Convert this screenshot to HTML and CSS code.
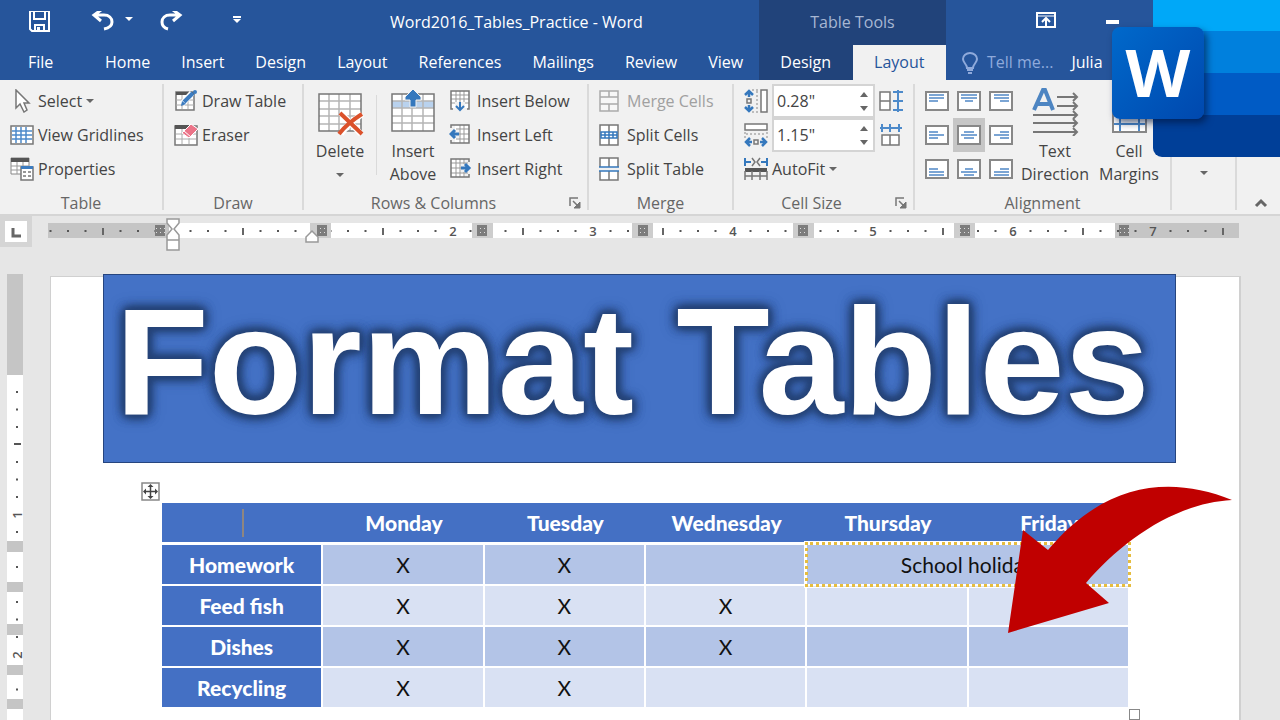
FILE: index.html
```html
<!DOCTYPE html>
<html lang="en">
<head>
    <meta charset="UTF-8">
    <meta name="viewport" content="width=device-width, initial-scale=1.0">
    <title>Word2016_Tables_Practice - Word</title>
    <link rel="stylesheet" href="styles.css">
</head>
<body>
    <header class="top-bar">
        <div class="top-main">
            <div class="title-row">
                <div class="quick-access">
                    <button class="qa-btn qa-save" aria-label="Save">
                        <svg width="24" height="24" viewBox="0 0 24 24" fill="none" stroke="#fff" stroke-width="2"><path d="M2 0h19v20H4l-2-2z"/><path d="M6 1v7h11V1" /><path d="M7 20v-6h9v6" /><path d="M9 16h3v4H9z" fill="#fff" stroke="none"/></svg>
                    </button>
                    <button class="qa-btn" aria-label="Undo">
                        <svg width="24" height="24" viewBox="0 6 24 24" fill="none" stroke="#fff" stroke-width="3"><path d="m10 4-7 5 7 6M3 9h10c5 0 8 3 8 7s-3 6-8 7" transform="translate(0 1)"/></svg>
                    </button>
                    <button class="qa-btn qa-more" aria-label="Undo list">
                        <svg width="12" height="24" viewBox="0 4 12 24"><path d="M2 10h8l-4 4z" fill="#fff"/></svg>
                    </button>
                    <button class="qa-btn qa-redo" aria-label="Redo">
                        <svg width="24" height="24" viewBox="0 6 24 24" fill="none" stroke="#fff" stroke-width="3"><path d="m14 4 7 5-7 6M21 9H11c-5 0-8 3-8 7s2 6 6 7" transform="translate(0 1)"/></svg>
                    </button>
                    <button class="qa-btn" aria-label="Customize Quick Access Toolbar">
                        <svg width="12" height="24" viewBox="0 4 12 24" fill="#fff"><path d="M2 9h8v2H2zM2 12h8l-4 4z"/></svg>
                    </button>
                </div>
                <div class="doc-title">Word2016_Tables_Practice - Word</div>
            </div>
            <nav class="tabs">
                <button class="tab tab-file">File</button>
                <button class="tab">Home</button>
                <button class="tab">Insert</button>
                <button class="tab">Design</button>
                <button class="tab">Layout</button>
                <button class="tab">References</button>
                <button class="tab">Mailings</button>
                <button class="tab">Review</button>
                <button class="tab">View</button>
            </nav>
        </div>
        <div class="top-context">
            <div class="context-title">Table Tools</div>
            <nav class="context-tabs">
                <button class="tab">Design</button>
                <button class="tab tab-active">Layout</button>
            </nav>
        </div>
        <div class="top-right">
            <div class="window-row">
                <button class="qa-btn" aria-label="Ribbon display options">
                    <svg width="20" height="18" viewBox="0 0 20 18" fill="none" stroke="#fff"><path d="M1 2h18v14H1z" stroke-width="2"/><path d="M2 5h16"/><path d="M10 15V8M6 11l4-4 4 4" stroke-width="2"/></svg>
                </button>
                <button class="qa-btn" aria-label="Minimize">
                    <svg width="14" height="18" viewBox="0 0 14 18"><path d="M0 9h13v4H0z" fill="#fff"/></svg>
                </button>
            </div>
            <div class="tell-row">
                <button class="tell-me">
                    <svg width="18" height="24" viewBox="0 0 18 24" fill="none" stroke="#8faadb" stroke-width="2"><path d="M6 17c0-4-4-5-4-9a7 6 0 0 1 14 0c0 4-4 5-4 9zM6 19h6M7 22h4"/></svg>
                    Tell me...
                </button>
                <button class="account">Julia</button>
            </div>
        </div>
    </header>

    <section class="ribbon">
        <div class="group group-table">
            <div class="group-body">
                <div class="stack">
                    <button class="cmd">
                        <svg width="24" height="24" viewBox="0 0 24 24"><path d="M6 1v18l4-4 4 8 3-2-3-7h5z" fill="#fff" stroke="#777" stroke-width="1.5"/></svg>
                        Select <span class="caret"></span>
                    </button>
                    <button class="cmd">
                        <svg width="24" height="24" viewBox="0 0 24 24" fill="none"><path d="M1 3h22v18H1z" fill="#fff" stroke="#777" stroke-width="1.5"/><path d="M6 4v16M11 4v16M16 4v16M2 8h20M2 12h20M2 16h20" stroke="#4d8aca" stroke-width="1.5"/></svg>
                        View Gridlines
                    </button>
                    <button class="cmd">
                        <svg width="24" height="24" viewBox="0 0 24 24" fill="none"><path d="M1 1h18v16H1z" fill="#fff" stroke="#888"/><path d="M1 1h18v4H1z" fill="#555"/><path d="M7 5v12M13 5v12M1 9h18M1 13h18" stroke="#999"/><path d="M11 10h12v13H11z" fill="#fff" stroke="#777" stroke-width="1.5"/><path d="M11 9h12v3H11z" fill="#3c7cc0"/><path d="M13 15h3M18 15h3M13 19h3M18 19h3" stroke="#777" stroke-width="1.5"/></svg>
                        Properties
                    </button>
                </div>
            </div>
            <div class="group-name">Table</div>
        </div>

        <div class="group group-draw">
            <div class="group-body">
                <div class="stack">
                    <button class="cmd">
                        <svg width="24" height="24" viewBox="0 0 24 24" fill="none"><path d="M2 3h18v18H2z" fill="#fff" stroke="#777" stroke-width="1.5"/><path d="M2 3h18v3H2z" fill="#555"/><path d="M8 6v14M14 6v14M2 11h18M2 16h18" stroke="#aaa"/><path d="m8 15 10-11" stroke="#fff" stroke-width="6"/><path d="m10 13 9-9" stroke="#3c7cc0" stroke-width="4"/><path d="m7 17 1-5 4 3z" fill="#3c7cc0"/><circle cx="21" cy="3" r="2" fill="#3c7cc0"/></svg>
                        Draw Table
                    </button>
                    <button class="cmd">
                        <svg width="24" height="24" viewBox="0 0 24 24" fill="none"><path d="M1 3h22v19H1z" fill="#fff" stroke="#777" stroke-width="1.5"/><path d="M1 2h16v4H1z" fill="#555"/><path d="M8 6v15M15 6v15M2 11h20M2 16h20" stroke="#aaa"/><path d="m8 10 9-9 7 5-9 9z" fill="#eb7488" stroke="#fff"/><path d="m10 8 7 6" stroke="#fff"/></svg>
                        Eraser
                    </button>
                </div>
            </div>
            <div class="group-name">Draw</div>
        </div>

        <div class="group group-rows">
            <div class="group-body">
                <button class="big-cmd">
                    <svg width="48" height="48" viewBox="0 0 48 48" fill="none"><path d="M3 6h42v37H3z" fill="#fff"/><path d="M13 6v37M23 6v37M34 6v37M3 13h42M3 21h42M3 28h42M3 36h42" stroke="#b5b5b5" stroke-width="1.5"/><path d="M3 6h42v37H3z" stroke="#777" stroke-width="1.5"/><path d="M25 25 45 46M46 26C38 32 30 38 25 46" stroke="#fff" stroke-width="6"/><path d="M24 25 46 46M46 26C38 31 29 38 23 46" stroke="#db512b" stroke-width="4"/></svg>
                    <span>Delete</span>
                    <span class="big-line"><i class="caret"></i></span>
                </button>
                <span class="divider"></span>
                <button class="big-cmd">
                    <svg width="48" height="48" viewBox="0 0 48 48" fill="none"><path d="M3 6h42v37H3z" fill="#fff"/><path d="M3 13h42v7H3z" fill="#b9d2ee"/><path d="M13 6v37M23 6v37M34 6v37M3 13h42M3 20h42M3 28h42M3 35h42" stroke="#b5b5b5" stroke-width="1.5"/><path d="M3 6h42v37H3z" stroke="#777" stroke-width="1.5"/><path d="m24 1 8 8v3h-5v7h-6v-7h-5V9z" fill="#3578bd" stroke="#f1f1f1"/></svg>
                    <span>Insert<br>Above</span>
                </button>
                <div class="stack">
                    <button class="cmd">
                        <svg width="24" height="24" viewBox="0 0 24 24" fill="none"><path d="M2 2h18v17H2z" fill="#fff"/><path d="M7 2v15M11 2v15M15 2v15M2 6h18M2 10h18M2 14h18" stroke="#999"/><path d="M4 20H2V2h18v18h-2" stroke="#777" stroke-width="1.5"/><path d="M6 13h10v11H6z" fill="#f1f1f1"/><path d="M11 13v8M7 17l4 4 4-4" stroke="#3578bd" stroke-width="2"/></svg>
                        Insert Below
                    </button>
                    <button class="cmd">
                        <svg width="24" height="24" viewBox="0 0 24 24" fill="none"><path d="M6 2h14v18H6z" fill="#fff"/><path d="M11 2v18M15 2v18M7 6h13M7 11h13M7 16h13" stroke="#999"/><path d="M2 5V2h18v18H2v-3" stroke="#777" stroke-width="1.5"/><path d="M1 7h9v8H1z" fill="#f1f1f1"/><path d="M10 11H2M6 7l-4 4 4 4" stroke="#3578bd" stroke-width="3"/></svg>
                        Insert Left
                    </button>
                    <button class="cmd">
                        <svg width="24" height="24" viewBox="0 0 24 24" fill="none"><path d="M2 2h14v18H2z" fill="#fff"/><path d="M7 2v18M11 2v18M15 2v18M2 6h17M2 11h14M2 16h17" stroke="#999"/><path d="M20 5V2H2v18h18v-3" stroke="#777" stroke-width="1.5"/><path d="M12 7h9v8h-9z" fill="#f1f1f1"/><path d="M12 11h8M16 7l4 4-4 4" stroke="#3578bd" stroke-width="3"/></svg>
                        Insert Right
                    </button>
                </div>
            </div>
            <div class="group-name">Rows &amp; Columns</div>
            <button class="launcher" aria-label="Insert Cells"><svg width="12" height="12" viewBox="0 0 12 12" fill="none" stroke="#777"><path d="M1 9V1h8M4 4l5 5" stroke-width="1.5"/><path d="M11 5v6H5z" fill="#777"/></svg></button>
        </div>

        <div class="group group-merge">
            <div class="group-body">
                <div class="stack">
                    <button class="cmd" disabled>
                        <svg width="24" height="24" viewBox="0 0 24 24" fill="#f7f7f7" stroke="#aaa" stroke-width="1.5"><path d="M1 2h18v20H1zM1 8h18M1 15h18M10 2v6M10 15v7"/></svg>
                        Merge Cells
                    </button>
                    <button class="cmd">
                        <svg width="24" height="24" viewBox="0 0 24 24" fill="#fff" stroke="#777" stroke-width="1.5"><path d="M1 2h18v20H1zM10 2v20"/><path d="M2 9h16v6H2zM6 9v6M10 9v6M14 9v6M2 12h16" stroke="#3578bd"/></svg>
                        Split Cells
                    </button>
                    <button class="cmd">
                        <svg width="24" height="24" viewBox="0 0 24 24" fill="#fff" stroke="#777" stroke-width="1.5"><path d="M1 10V1h18v9M10 1v9M1 14v9h18v-9M10 14v9"/><path d="M0 10h20M0 14h20" stroke="#3578bd"/></svg>
                        Split Table
                    </button>
                </div>
            </div>
            <div class="group-name">Merge</div>
        </div>

        <div class="group group-size">
            <div class="group-body">
                <div class="stack">
                    <div class="size-row">
                        <label for="rowHeight" aria-label="Height"><svg width="24" height="24" viewBox="0 0 24 24" fill="none" stroke="#777" stroke-width="1.5"><path d="M17 1h6v22h-6z" fill="#fff"/><path d="M8 1h8M8 23h8M13 2v20" stroke="#aaa" stroke-dasharray="2 2"/><path d="M3 10h4v4H3z"/><path d="M5 8V2M1 6l4-4 4 4M5 16v6M1 18l4 4 4-4" stroke="#3578bd" stroke-width="2.5"/></svg></label>
                        <div class="spin">
                            <input type="text" id="rowHeight" value="0.28&quot;">
                            <div class="spin-btns"><button aria-label="Taller" class="spin-up"></button><button aria-label="Shorter" class="spin-down"></button></div>
                        </div>
                        <button class="distribute" aria-label="Distribute rows"><svg width="24" height="24" viewBox="0 0 24 24" fill="none" stroke="#777" stroke-width="1.5"><path d="M1 3h10v18H1zM1 12h10" fill="#fff"/><path d="M14 3h10M14 12h10M14 21h10M19 1v22" stroke="#4d8aca" stroke-width="2"/></svg></button>
                    </div>
                    <div class="size-row">
                        <label for="colWidth" aria-label="Width"><svg width="24" height="24" viewBox="0 0 24 24" fill="none" stroke="#777" stroke-width="1.5"><path d="M1 1h22v6H1z" fill="#fff"/><path d="M1 9v7M23 9v7M2 11h20" stroke="#aaa" stroke-dasharray="2 2"/><path d="M10 17h4v4h-4z"/><path d="M8 19H2M6 15l-4 4 4 4M16 19h6M18 15l4 4-4 4" stroke="#3578bd" stroke-width="2.5"/></svg></label>
                        <div class="spin">
                            <input type="text" id="colWidth" value="1.15&quot;">
                            <div class="spin-btns"><button aria-label="Wider" class="spin-up"></button><button aria-label="Narrower" class="spin-down"></button></div>
                        </div>
                        <button class="distribute" aria-label="Distribute columns"><svg width="24" height="24" viewBox="0 0 24 24" fill="none" stroke="#777" stroke-width="1.5"><path d="M3 12h17v10H3zM11 12v10" fill="#fff"/><path d="M1 5h22M3 1v8M11 1v8M20 1v8" stroke="#4d8aca" stroke-width="2"/></svg></button>
                    </div>
                    <button class="cmd">
                        <svg width="24" height="24" viewBox="0 0 24 24" fill="none" stroke="#777" stroke-width="1.5"><path d="M1 1v8M1 5h6M23 1v8M23 5h-6" stroke="#3578bd" stroke-width="2"/><path d="m8 1 3 4-3 4M16 1l-3 4 3 4"/><path d="M1 13h22" stroke="#555" stroke-width="4"/><path d="M1 14v9M8 14v9M16 14v9M23 14v9M1 19h22"/></svg>
                        AutoFit <span class="caret"></span>
                    </button>
                </div>
            </div>
            <div class="group-name">Cell Size</div>
            <button class="launcher" aria-label="Table Properties"><svg width="12" height="12" viewBox="0 0 12 12" fill="none" stroke="#777"><path d="M1 9V1h8M4 4l5 5" stroke-width="1.5"/><path d="M11 5v6H5z" fill="#777"/></svg></button>
        </div>

        <div class="group group-align">
            <div class="group-body">
                <div class="align-grid">
                    <button aria-label="Align top left"><svg width="24" height="20" viewBox="0 0 24 20"><path class="box" d="M1 1h22v18H1z"/><path class="ln" d="M4 4h15M4 7h15M4 10h9"/></svg></button>
                    <button aria-label="Align top center"><svg width="24" height="20" viewBox="0 0 24 20"><path class="box" d="M1 1h22v18H1z"/><path class="ln" d="M4 4h16M4 7h16M8 10h8"/></svg></button>
                    <button aria-label="Align top right"><svg width="24" height="20" viewBox="0 0 24 20"><path class="box" d="M1 1h22v18H1z"/><path class="ln" d="M5 4h15M5 7h15M11 10h9"/></svg></button>
                    <button aria-label="Align center left"><svg width="24" height="20" viewBox="0 0 24 20"><path class="box" d="M1 1h22v18H1z"/><path class="ln" d="M4 7h9M4 10h15M4 13h9"/></svg></button>
                    <button aria-label="Align center" class="on"><svg width="24" height="20" viewBox="0 0 24 20"><path class="box" d="M1 1h22v18H1z"/><path class="ln" d="M7 7h10M4 10h16M7 13h10"/></svg></button>
                    <button aria-label="Align center right"><svg width="24" height="20" viewBox="0 0 24 20"><path class="box" d="M1 1h22v18H1z"/><path class="ln" d="M11 7h9M5 10h15M11 13h9"/></svg></button>
                    <button aria-label="Align bottom left"><svg width="24" height="20" viewBox="0 0 24 20"><path class="box" d="M1 1h22v18H1z"/><path class="ln" d="M4 10h9M4 13h15M4 16h15"/></svg></button>
                    <button aria-label="Align bottom center"><svg width="24" height="20" viewBox="0 0 24 20"><path class="box" d="M1 1h22v18H1z"/><path class="ln" d="M8 10h8M4 13h16M7 16h10"/></svg></button>
                    <button aria-label="Align bottom right"><svg width="24" height="20" viewBox="0 0 24 20"><path class="box" d="M1 1h22v18H1z"/><path class="ln" d="M11 10h9M5 13h15M5 16h15"/></svg></button>
                </div>
                <button class="big-cmd big-direction">
                    <svg width="48" height="48" viewBox="0 0 48 48" fill="none" stroke="#777" stroke-width="2"><path d="M3 22 12 2h2l8 20M7 16h11" stroke="#4d85c2" stroke-width="4"/><path d="M26 9h20M26 18h20M2 27h44M2 35h44M2 44h44"/><path d="m42 5 4 4-4 4M42 14l4 4-4 4M42 23l4 4-4 4M42 31l4 4-4 4M42 40l4 4-4 4"/></svg>
                    <span>Text<br>Direction</span>
                </button>
                <button class="big-cmd big-margins">
                    <svg width="48" height="48" viewBox="0 0 48 48" fill="none"><path d="M8 6h33v38H8z" fill="#fff" stroke="#888" stroke-width="2"/><path d="M15 7v36M34 7v36M9 14h31M9 36h31" stroke="#4d8aca" stroke-width="2"/></svg>
                    <span>Cell<br>Margins</span>
                </button>
            </div>
            <div class="group-name">Alignment</div>
        </div>

        <div class="group group-data">
            <button class="group-more" aria-label="Data"><span class="caret"></span></button>
        </div>
        <div class="group-end">
            <button class="collapse" aria-label="Collapse the Ribbon"><svg width="14" height="10" viewBox="0 0 14 10" fill="none" stroke="#666" stroke-width="3"><path d="m2 8 5-5 5 5"/></svg></button>
        </div>
    </section>

    <div class="ruler-row">
        <button class="tab-stop" aria-label="Left tab"><svg width="12" height="12" viewBox="0 0 12 12" fill="none" stroke="#666" stroke-width="3"><path d="M3 2v8h8"/></svg></button>
        <!-- horizontal ruler, 140px to the inch, zero at x=125 -->
        <svg class="ruler" width="1192" height="36" viewBox="0 0 1192 36">
            <defs>
                <pattern id="mesh" width="4" height="4" patternUnits="userSpaceOnUse"><path d="M0 0h4v4H0z" fill="#7d7d7d"/><path d="M0 0h1v1H0z" fill="#ddd"/></pattern>
            </defs>
            <path d="M0 7h1191v15H0z" fill="#fff"/>
            <path d="M0 7h121v15H0zM1067 7h124v15h-124z" fill="#c5c5c5"/>
            <path d="M1.500 15H1190" stroke="#555" stroke-width="2" stroke-dasharray="2 15.500 2 15.500 2 33 2 15.500 2 15.500 2 33"/>
            <path d="M54 15.500H1190" stroke="#666" stroke-width="7" stroke-dasharray="2 138"/>
            <g fill="#cdcdcd"><path d="M262 7h21v15h-21zM424 7h21v15h-21zM584 7h21v15h-21zM745 7h21v15h-21zM906 7h21v15h-21z"/></g>
            <g fill="url(#mesh)"><path d="M107 9h10v11h-10zM269 9h10v11h-10zM429 9h10v11h-10zM590 9h10v11h-10zM750 9h10v11h-10zM912 9h10v11h-10zM1071 9h10v11h-10z"/></g>
            <g class="ruler-num"><text x="405" y="20">2</text><text x="545" y="20">3</text><text x="685" y="20">4</text><text x="825" y="20">5</text><text x="965" y="20">6</text><text x="1105" y="20">7</text></g>
            <g fill="#fff" stroke="#999" stroke-width="1.500"><path d="M119 3h12v4l-5 6 5 6v15h-12V19l5-6-5-6zM119 24h12"/><path d="M258 26v-5l6-6 6 6v5z"/></g>
        </svg>
    </div>

    <main class="workspace">
        <!-- vertical ruler -->
        <svg class="v-ruler" width="26" height="446" viewBox="0 0 26 446">
            <path d="M0 101h16v345H0z" fill="#fff"/>
            <path d="M10 117V446" stroke="#555" stroke-width="2" stroke-dasharray="2 15.500 2 15.500 2 33 2 15.500 2 15.500 2 33"/>
            <path d="M0 0h16v101H0zM0 267h16v11H0zM0 308h16v10H0zM0 350h16v11H0zM0 391h16v10H0zM0 425h16v10H0z" fill="#c5c5c5"/>
            <path d="M7 170h7" stroke="#555" stroke-width="2"/>
            <g class="ruler-num"><text transform="translate(15 241) rotate(-90)">1</text><text transform="translate(15 381) rotate(-90)">2</text></g>
        </svg>
        <article class="page">
            <h1 class="banner">Format Tables</h1>
            <div class="table-wrap">
                <svg class="move-handle" width="19" height="19" viewBox="0 0 19 19" fill="none"><path d="M1 1h17v17H1z" fill="#fff" stroke="#888" stroke-width="1.500"/><path d="M9.500 4v11M4 9.500h11" stroke="#444" stroke-width="1.500"/><path d="m9.500 2 3 3h-6zM9.500 17l3-3h-6zM2 9.500l3-3v6zM17 9.500l-3-3v6z" fill="#444"/></svg>
                <table class="chores">
                    <thead>
                        <tr>
                            <th><span class="text-cursor"></span></th>
                            <th>Monday</th>
                            <th>Tuesday</th>
                            <th>Wednesday</th>
                            <th>Thursday</th>
                            <th>Friday</th>
                        </tr>
                    </thead>
                    <tbody>
                        <tr><th>Homework</th><td>X</td><td>X</td><td></td><td colspan="2" class="merged">School holiday</td></tr>
                        <tr><th>Feed fish</th><td>X</td><td>X</td><td>X</td><td></td><td></td></tr>
                        <tr><th>Dishes</th><td>X</td><td>X</td><td>X</td><td></td><td></td></tr>
                        <tr><th>Recycling</th><td>X</td><td>X</td><td></td><td></td><td></td></tr>
                    </tbody>
                </table>
                <span class="resize-handle"></span>
                <svg class="arrow" width="226" height="148" viewBox="1007 486 226 148"><path d="M1232 500C1170 475 1105 482 1048 550L1023 530 1008 633 1109 603 1086 583C1122 541 1175 503 1232 500Z" fill="#c00000"/></svg>
            </div>
        </article>
    </main>

    <div class="word-logo">
        <div class="logo-sheets"><span></span><span></span><span></span><span></span></div>
        <div class="logo-tile">W</div>
    </div>
</body>
</html>
```
FILE: styles.css
```css
* {
    box-sizing: border-box;
}
body {
    margin: 0;
    height: 100vh;
    overflow: hidden;
    position: relative;
    display: flex;
    flex-direction: column;
    background-color: #e6e6e6;
    color: #444;
    font-family: "Open Sans", "Noto Sans", sans-serif;
    font-size: 16px;
    line-height: 23px;
}
button {
    border: none;
    background: none;
    padding: 0;
    margin: 0;
    color: inherit;
    font: inherit;
    white-space: nowrap;
}
svg {
    display: block;
    flex: none;
}

/* title bar and tabs */
.top-bar {
    display: flex;
    flex: none;
    height: 80px;
    background-color: #26559b;
    color: #fff;
}
.top-main {
    flex: 1;
}
.title-row {
    display: flex;
    align-items: center;
    height: 45px;
}
.quick-access {
    display: flex;
    align-items: center;
    width: 390px;
    height: 36px;
    padding-left: 28px;
}
.qa-save {
    margin-right: 39px;
}
.qa-more {
    margin: 0 24px 0 8px;
}
.qa-redo {
    margin-right: 48px;
}
.tabs {
    display: flex;
    gap: 3px;
    height: 35px;
    padding-left: 14px;
}
.tab {
    padding: 0 14px;
}
.tab-file {
    width: 74px;
    text-align: left;
}
.top-context {
    display: flex;
    flex-direction: column;
    width: 187px;
    background-color: #21437a;
}
.context-title {
    height: 45px;
    line-height: 45px;
    text-align: center;
    color: #a7b7d3;
}
.context-tabs {
    display: flex;
    height: 35px;
}
.context-tabs .tab {
    flex: 1;
}
.tab-active {
    background-color: #f1f1f1;
    color: #26559b;
}
.top-right {
    width: 334px;
}
.window-row {
    display: flex;
    align-items: center;
    gap: 50px;
    height: 45px;
    padding: 0 0 6px 90px;
}
.tell-row {
    display: flex;
    align-items: center;
    gap: 18px;
    height: 35px;
    padding-left: 15px;
}
.tell-me {
    display: flex;
    align-items: center;
    gap: 8px;
    color: #8faadb;
}

/* ribbon */
.ribbon {
    display: flex;
    flex: none;
    height: 136px;
    padding-top: 4px;
    background-color: #f1f1f1;
    border-bottom: 2px solid #d5d5d5;
}
.group {
    position: relative;
    display: flex;
    flex-direction: column;
    height: 126px;
    border-right: 2px solid #dadada;
}
.group-body {
    display: flex;
    height: 102px;
    padding-left: 10px;
}
.group-name {
    height: 24px;
    line-height: 34px;
    text-align: center;
    color: #666;
}
.group-table { width: 164px; }
.group-draw { width: 140px; }
.group-rows { width: 285px; }
.group-merge { width: 145px; }
.group-size { width: 181px; }
.group-align { width: 257px; }
.group-data { width: 65px; }
.group-rows .group-body {
    padding-left: 0;
}
.group-align .group-body {
    padding-left: 6px;
}
.group-rows .group-name,
.group-size .group-name {
    padding-right: 24px;
}
.stack {
    display: flex;
    flex-direction: column;
}
.cmd {
    display: flex;
    align-items: center;
    gap: 4px;
    height: 34px;
}
.cmd:disabled {
    color: #a0a0a0;
}
.caret {
    display: inline-block;
    border: 4px solid transparent;
    border-top-color: #666;
    border-bottom: none;
}
.big-cmd {
    width: 72px;
    padding-top: 4px;
    display: flex;
    flex-direction: column;
    align-items: center;
}
.big-cmd svg {
    margin-bottom: 4px;
}
.big-line {
    line-height: 16px;
}
.big-direction {
    width: 76px;
}
.big-margins {
    width: 72px;
}
.divider {
    width: 1px;
    height: 80px;
    margin-top: 11px;
    background-color: #dadada;
}
.launcher {
    position: absolute;
    right: 6px;
    bottom: 1px;
}
.size-row {
    display: flex;
    align-items: center;
    gap: 4px;
    height: 34px;
}
.spin {
    display: flex;
    width: 103px;
    height: 34px;
    background-color: #fff;
    border: 2px solid #d4d4d4;
}
.spin input {
    width: 80px;
    padding: 0 0 0 3px;
    border: none;
    background: none;
    color: #444;
    font: inherit;
}
.spin-btns {
    display: flex;
    flex-direction: column;
    justify-content: center;
    gap: 9px;
    padding-left: 6px;
}
.spin-up,
.spin-down {
    border: 4px solid transparent;
}
.spin-up {
    border-bottom: 5px solid #666;
    border-top: none;
}
.spin-down {
    border-top: 5px solid #666;
    border-bottom: none;
}
.align-grid {
    display: grid;
    grid-template-columns: repeat(3, 32px);
    grid-auto-rows: 34px;
}
.align-grid button {
    display: flex;
    align-items: center;
    justify-content: center;
}
.align-grid .on {
    background-color: #c6c6c6;
}
.box {
    fill: #fff;
    stroke: #888;
    stroke-width: 2;
}
.ln {
    stroke: #7ba5d4;
    stroke-width: 2;
}
.group-more {
    padding-top: 74px;
}
.group-end {
    flex: 1;
    display: flex;
    align-items: flex-end;
    justify-content: center;
    padding: 0 0 6px 4px;
}

/* rulers */
.ruler-row {
    display: flex;
    flex: none;
    align-items: flex-start;
    height: 58px;
    gap: 16px;
}
.tab-stop {
    display: flex;
    align-items: center;
    justify-content: center;
    width: 32px;
    height: 31px;
    border: 5px solid #d5d5d5;
    background-color: #fff;
}
.ruler-num {
    font-size: 13px;
    font-weight: 600;
    text-anchor: middle;
    fill: #555;
}
.workspace {
    display: flex;
    flex: 1;
    min-height: 0;
    padding: 0 39px 0 7px;
}

/* document */
.page {
    flex: 1;
    margin: 2px 0 0 17px;
    padding: 0 63px 0 52px;
    background-color: #fff;
    border: 1px solid #d0d0d0;
    border-right-width: 2px;
    border-bottom: none;
}
.banner {
    height: 189px;
    margin: -3px 0 40px;
    padding-right: 14px;
    border: 1px solid #26457f;
    background-color: #4472c6;
    color: #fff;
    font-family: "Liberation Sans", Arial, sans-serif;
    font-size: 153px;
    font-weight: bold;
    line-height: 172px;
    text-align: center;
    white-space: nowrap;
    text-shadow: 0 0 4px #264478, 0 0 8px #264478, 0 0 8px #264478, 0 0 12px #264478, 0 0 12px #264478, 0 0 16px #264478;
}
.table-wrap {
    position: relative;
    margin: 0 46px 0 59px;
}
.chores {
    width: 100%;
    table-layout: fixed;
    border-collapse: separate;
    border-spacing: 0;
    color: #111;
    font-family: Lato, Calibri, sans-serif;
    font-size: 21px;
    line-height: 24px;
    text-align: center;
}
.chores th,
.chores td {
    height: 41px;
    padding: 1px 0 0;
    border: 0 solid #fff;
    border-width: 0 2px 2px 0;
}
.chores th {
    background-color: #4470c4;
    color: #fff;
    font-weight: 900;
}
.chores thead th {
    height: 42px;
    border-right-width: 0;
    border-bottom-width: 3px;
}
.chores td {
    background-color: #d9e1f3;
}
.chores tbody tr:nth-child(odd) td {
    background-color: #b3c4e7;
}
.text-cursor {
    display: block;
    width: 2px;
    height: 28px;
    margin: 0 auto;
    background-color: #8f8680;
}
.merged {
    position: relative;
}
.merged::after {
    content: "";
    position: absolute;
    inset: -3px -3px -3px -2px;
    border: 3px dotted #e6bd3f;
    outline: 1px solid #fff;
}
.move-handle {
    position: absolute;
    left: -21px;
    top: -21px;
}
.resize-handle {
    position: absolute;
    right: -10px;
    bottom: -11px;
    width: 11px;
    height: 11px;
    border: 1px solid #888;
    background-color: #fff;
}
.arrow {
    position: absolute;
    right: -103px;
    top: -17px;
}

/* Word logo over the window corner */
.word-logo {
    position: absolute;
    top: 0;
    right: 0;
    width: 168px;
    height: 157px;
    padding-left: 41px;
}
.logo-sheets {
    display: grid;
    grid-template-rows: 31px 42px 42px 42px;
    overflow: hidden;
    border-bottom-left-radius: 9px;
}
.logo-sheets span:nth-child(1) { background-color: #00a8f8; }
.logo-sheets span:nth-child(2) { background-color: #0080dd; }
.logo-sheets span:nth-child(3) { background-color: #005bc5; }
.logo-sheets span:nth-child(4) { background-color: #003f98; }
.logo-tile {
    position: absolute;
    left: 0;
    top: 27px;
    width: 92px;
    height: 92px;
    border-radius: 8px;
    background: linear-gradient(135deg, #0069cb, #0048ae);
    box-shadow: 3px 4px 7px rgba(0, 20, 60, 0.6);
    color: #fff;
    font-size: 67px;
    font-weight: bold;
    line-height: 88px;
    text-align: center;
}
```
